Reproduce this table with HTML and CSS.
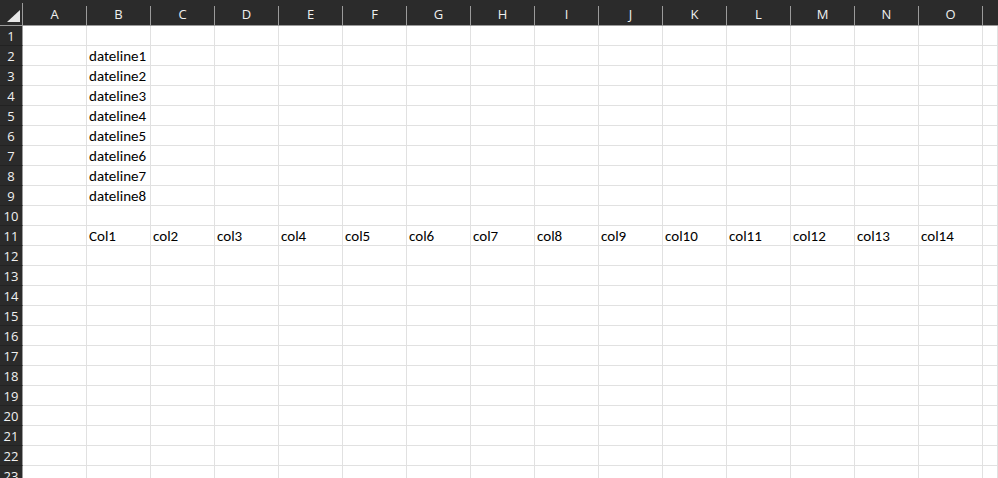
FILE: index.html
```html
<!DOCTYPE html>
<html>
<head>
<meta charset="utf-8">
<link rel="stylesheet" href="styles.css">
</head>
<body>
<div class="sheet" id="sheet">
  <div class="corner"><div class="corner-in"><span class="tri"></span></div></div>
  <div class="ch"><div class="ch-in">A</div></div>
  <div class="ch"><div class="ch-in">B</div></div>
  <div class="ch"><div class="ch-in">C</div></div>
  <div class="ch"><div class="ch-in">D</div></div>
  <div class="ch"><div class="ch-in">E</div></div>
  <div class="ch"><div class="ch-in">F</div></div>
  <div class="ch"><div class="ch-in">G</div></div>
  <div class="ch"><div class="ch-in">H</div></div>
  <div class="ch"><div class="ch-in">I</div></div>
  <div class="ch"><div class="ch-in">J</div></div>
  <div class="ch"><div class="ch-in">K</div></div>
  <div class="ch"><div class="ch-in">L</div></div>
  <div class="ch"><div class="ch-in">M</div></div>
  <div class="ch"><div class="ch-in">N</div></div>
  <div class="ch"><div class="ch-in">O</div></div>
  <div class="ch last"><div class="ch-in"></div></div>
</div>
<script src="app.js"></script>
</body>
</html>
```

FILE: app.js
```js
(function () {
  var sheet = document.getElementById('sheet');
  var data = {
    2: {1: 'dateline1'}, 3: {1: 'dateline2'}, 4: {1: 'dateline3'}, 5: {1: 'dateline4'},
    6: {1: 'dateline5'}, 7: {1: 'dateline6'}, 8: {1: 'dateline7'}, 9: {1: 'dateline8'},
    11: {1: 'Col1', 2: 'col2', 3: 'col3', 4: 'col4', 5: 'col5', 6: 'col6', 7: 'col7',
         8: 'col8', 9: 'col9', 10: 'col10', 11: 'col11', 12: 'col12', 13: 'col13', 14: 'col14'}
  };
  var html = '';
  for (var r = 1; r <= 23; r++) {
    html += '<div class="rh">' + r + '</div>';
    for (var c = 0; c < 16; c++) {
      var t = (data[r] && data[r][c]) || '';
      html += '<div class="cell">' + t + '</div>';
    }
  }
  sheet.insertAdjacentHTML('beforeend', html);
})();
```

FILE: styles.css
```css
html, body {
  margin: 0;
  padding: 0;
  background: #ffffff;
  overflow: hidden;
}
.sheet {
  display: grid;
  grid-template-columns: 23px repeat(15, 64px) 1fr;
  grid-auto-rows: 20px;
  grid-template-rows: 26px;
  width: 998px;
}
.corner {
  background: #2b2b2b;
  border-bottom: 1px solid #9b9b9b;
  display: flex;
  flex-direction: column;
  justify-content: flex-end;
}
.corner-in {
  height: 19px;
  border-right: 1px solid #9b9b9b;
  display: flex;
  align-items: flex-end;
  justify-content: flex-end;
  padding: 0 2px 3px 0;
}
.tri {
  width: 0;
  height: 0;
  border-left: 13px solid transparent;
  border-bottom: 12px solid #e8e8e8;
}
.ch {
  background: #2b2b2b;
  border-bottom: 1px solid #9b9b9b;
  display: flex;
  flex-direction: column;
  justify-content: flex-end;
}
.ch-in {
  height: 19px;
  border-right: 1px solid #9b9b9b;
  color: #f0f0f0;
  font-family: "Open Sans", "Noto Sans", sans-serif;
  font-size: 13px;
  line-height: 17px;
  display: flex;
  align-items: flex-start;
  justify-content: center;
}
.ch.last .ch-in { border-right: none; }
.rh {
  background: #2b2b2b;
  border-right: 1px solid #9b9b9b;
  border-bottom: 1px solid #222222;
  color: #f0f0f0;
  font-family: "Open Sans", "Noto Sans", sans-serif;
  font-size: 13px;
  line-height: 20px;
  text-align: center;
  box-sizing: border-box;
}
.cell {
  border-right: 1px solid #e1e1e1;
  border-bottom: 1px solid #e1e1e1;
  box-sizing: border-box;
  font-family: Carlito, Calibri, "Open Sans", sans-serif;
  font-size: 15px;
  line-height: 19px;
  color: #000000;
  padding: 1px 0 0 2px;
  white-space: nowrap;
  overflow: visible;
}
```
